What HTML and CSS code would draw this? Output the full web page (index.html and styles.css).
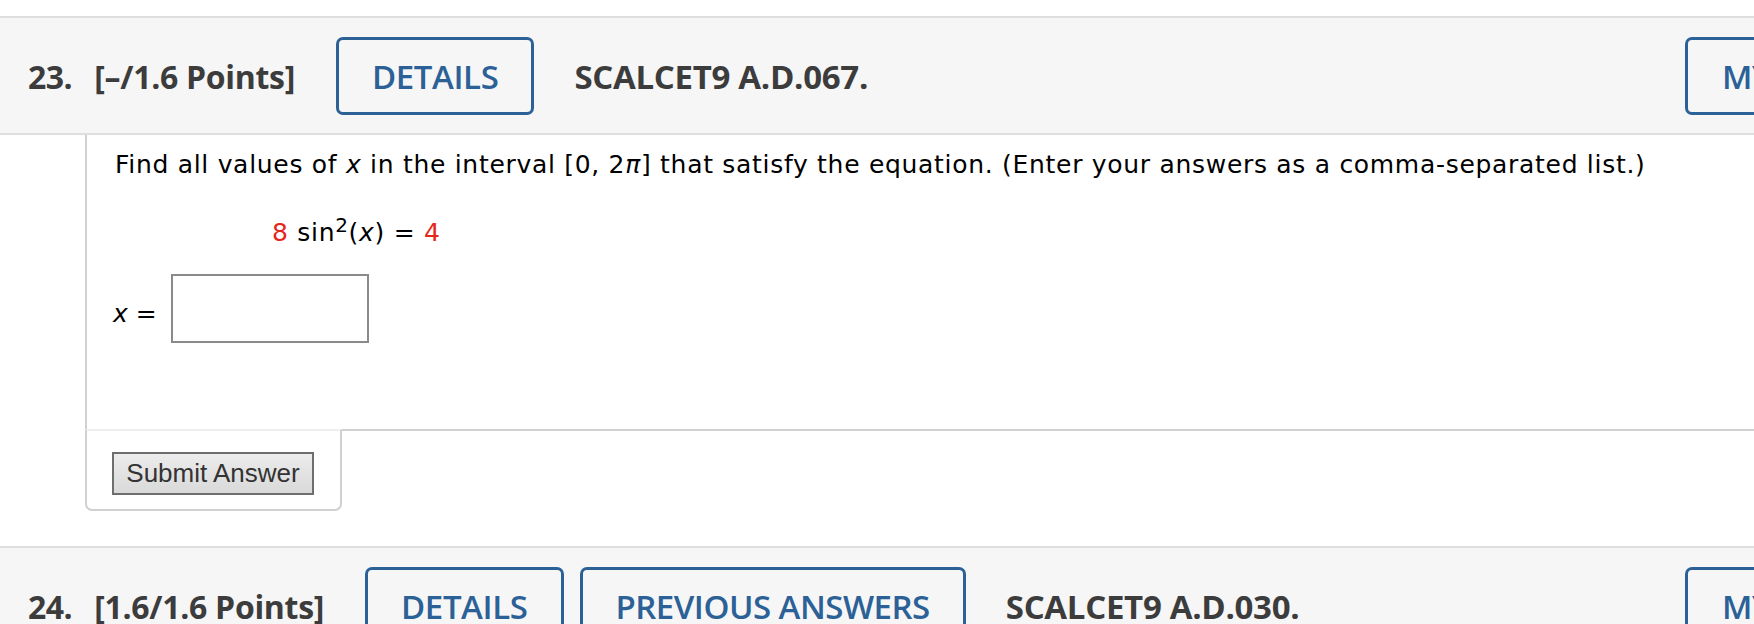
FILE: index.html
```html
<!DOCTYPE html>
<html>
<head>
<meta charset="utf-8">
<link rel="stylesheet" href="styles.css">
</head>
<body>
<div class="page">
  <div class="qhead">
    <span class="qnum">23.</span>
    <span class="qpts">[–/1.6 Points]</span>
    <span class="btn first">DETAILS</span>
    <span class="qcode">SCALCET9 A.D.067.</span>
    <span class="btn my">MY NOTES</span>
  </div>
  <div class="qbody">
    <div class="qcontent">
      <p class="prompt">Find all values of <i>x</i> in the interval [0, 2<i>π</i>] that satisfy the equation. (Enter your answers as a comma-separated list.)</p>
      <p class="eq"><span class="red">8</span> sin<sup>2</sup>(<i>x</i>) = <span class="red">4</span></p>
      <div class="answer"><span class="avar"><i>x</i> =</span><span class="input"></span></div>
    </div>
    <div class="submitbox"><span class="submit">Submit Answer</span></div>
  </div>
  <div class="qhead second">
    <span class="qnum">24.</span>
    <span class="qpts">[1.6/1.6 Points]</span>
    <span class="btn first">DETAILS</span>
    <span class="btn prev">PREVIOUS ANSWERS</span>
    <span class="qcode">SCALCET9 A.D.030.</span>
    <span class="btn my">MY NOTES</span>
  </div>
</div>
</body>
</html>
```

FILE: styles.css
```css
html, body {
  margin: 0;
  padding: 0;
  background: #fff;
  overflow: hidden;
}
.page {
  width: 1754px;
  height: 624px;
  overflow: hidden;
  padding-top: 16px;
  box-sizing: border-box;
}
.qhead {
  display: flex;
  align-items: center;
  background: #f6f6f6;
  border-top: 2px solid #dedede;
  border-bottom: 2px solid #dedede;
  padding: 19px 0 18px 28px;
  font-family: "Open Sans", sans-serif;
  color: #3c3c3c;
  white-space: nowrap;
  overflow: hidden;
}
.qhead.second {
  border-bottom: none;
  padding-bottom: 40px;
  margin-top: 35px;
}
.qnum {
  font-weight: 700;
  font-size: 32px;
  letter-spacing: -0.5px;
}
.qpts {
  font-weight: 700;
  font-size: 32px;
  letter-spacing: -0.3px;
  margin-left: 22px;
}
.btn {
  display: inline-flex;
  align-items: center;
  height: 78px;
  box-sizing: border-box;
  padding: 0 33px;
  border: 3px solid #2b6196;
  border-radius: 7px;
  color: #2b6196;
  font-weight: 600;
  font-size: 33px;
  letter-spacing: -0.4px;
  flex-shrink: 0;
}
.btn.first {
  margin-left: 41px;
}
.btn.prev {
  margin-left: 16px;
  letter-spacing: -0.5px;
}
.btn.my {
  margin-left: auto;
  width: 240px;
  margin-right: -171px;
  padding: 0 34px;
}
.qcode {
  font-weight: 700;
  font-size: 33px;
  letter-spacing: -0.3px;
  margin-left: 40px;
}
.qbody {
  margin-left: 85px;
  font-family: "DejaVu Sans", Verdana, sans-serif;
  color: #000;
}
.qcontent {
  border-left: 2px solid #d0d0d0;
  border-bottom: 2px solid #d0d0d0;
  padding: 15px 0 0 28px;
  height: 296px;
  box-sizing: border-box;
}
.prompt {
  margin: 0;
  font-size: 25px;
  line-height: 30px;
  letter-spacing: 0.7px;
}
.eq {
  margin: 38px 0 0 0;
  padding-left: 157px;
  font-size: 25px;
  line-height: 30px;
  letter-spacing: 0.7px;
}
.eq sup {
  font-size: 20px;
  line-height: 0;
}
.red {
  color: #e5261b;
}
.answer {
  display: flex;
  align-items: center;
  margin: 26px 0 0 -2px;
  font-size: 25px;
  line-height: 30px;
}
.avar {
  width: 58px;
  padding-top: 10px;
}
.input {
  width: 198px;
  height: 69px;
  box-sizing: border-box;
  border: 2px solid #8a8a8a;
  background: #fff;
}
.submitbox {
  width: 257px;
  height: 82px;
  box-sizing: border-box;
  border: 2px solid #d0d0d0;
  border-top: 2px solid #eeeeee;
  border-radius: 0 0 7px 7px;
  margin-top: -2px;
  padding: 21px 0 0 25px;
}
.submit {
  display: inline-block;
  width: 202px;
  height: 43px;
  box-sizing: border-box;
  border: 2px solid #6e6e6e;
  background: linear-gradient(#ececec, #d9d9d9);
  font-family: "Liberation Sans", Arial, sans-serif;
  font-size: 26px;
  line-height: 39px;
  text-align: center;
  color: #333;
}
```
